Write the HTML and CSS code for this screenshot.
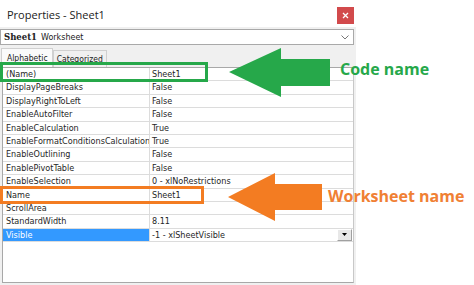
FILE: index.html
```html
<!DOCTYPE html>
<html>
<head>
<meta charset="utf-8">
<link rel="stylesheet" href="styles.css">
</head>
<body>
<div class="stage">
  <div class="window">
    <div class="titlebar">
      <span class="title">Properties - Sheet1</span>
      <div class="close">
        <svg width="7" height="7" viewBox="0 0 7 7"><path d="M1 1L6 6M6 1L1 6" stroke="#fff" stroke-width="1.3"/></svg>
      </div>
    </div>
    <div class="body">
      <div class="objsel">
        <span class="objname">Sheet1</span><span class="objtype">Worksheet</span>
        <svg class="chev" width="8" height="5" viewBox="0 0 8 5"><path d="M0.5 0.5L4 4L7.5 0.5" fill="none" stroke="#777" stroke-width="1"/></svg>
      </div>
      <div class="tabs">
        <div class="tab active">Alphabetic</div>
        <div class="tab">Categorized</div>
      </div>
      <div class="grid">
        <div class="row"><div class="k">(Name)</div><div class="v">Sheet1</div></div>
        <div class="row"><div class="k">DisplayPageBreaks</div><div class="v">False</div></div>
        <div class="row"><div class="k">DisplayRightToLeft</div><div class="v">False</div></div>
        <div class="row"><div class="k">EnableAutoFilter</div><div class="v">False</div></div>
        <div class="row"><div class="k">EnableCalculation</div><div class="v">True</div></div>
        <div class="row"><div class="k">EnableFormatConditionsCalculation</div><div class="v">True</div></div>
        <div class="row"><div class="k">EnableOutlining</div><div class="v">False</div></div>
        <div class="row"><div class="k">EnablePivotTable</div><div class="v">False</div></div>
        <div class="row"><div class="k">EnableSelection</div><div class="v">0 - xlNoRestrictions</div></div>
        <div class="row"><div class="k">Name</div><div class="v">Sheet1</div></div>
        <div class="row"><div class="k">ScrollArea</div><div class="v"></div></div>
        <div class="row"><div class="k">StandardWidth</div><div class="v">8.11</div></div>
        <div class="row sel"><div class="k">Visible</div><div class="v">-1 - xlSheetVisible<span class="ddbtn"><svg width="5" height="3" viewBox="0 0 5 3"><path d="M0 0H5L2.5 3Z" fill="#000"/></svg></span></div></div>
      </div>
    </div>
  </div>

  <svg class="overlay" width="474" height="285" viewBox="0 0 474 285">
    <rect x="1.5" y="63.5" width="205" height="17" fill="none" stroke="#26a84a" stroke-width="3"/>
    <polygon points="229,72 281,48 281,59 330,59 330,86 281,86 281,97" fill="#26a84a"/>
    <rect x="1.5" y="187.5" width="201" height="15" fill="none" stroke="#f37c22" stroke-width="3"/>
    <polygon points="228,197 275,173 275,184 322,184 322,210 275,210 275,221" fill="#f37c22"/>
  </svg>
  <div class="label code">Code name</div>
  <div class="label wsname">Worksheet name</div>
</div>
</body>
</html>
```
FILE: styles.css
```css
html, body {
  margin: 0;
  padding: 0;
  background: #fff;
}
.stage {
  position: relative;
  width: 474px;
  height: 285px;
  overflow: hidden;
}
.window {
  width: 356px;
  height: 285px;
  display: flex;
  flex-direction: column;
}
.titlebar {
  height: 27px;
  background: #fff;
  display: flex;
  align-items: flex-start;
  justify-content: space-between;
  padding: 7px 2px 0 7px;
  box-sizing: border-box;
}
.title {
  font-family: "Open Sans", sans-serif;
  font-size: 11px;
  line-height: 16px;
  color: #222;
}
.close {
  width: 17px;
  height: 17px;
  background: #d24a4c;
  display: flex;
  align-items: center;
  justify-content: center;
}
.body {
  flex: 1;
  background: #f0f0f0;
  display: flex;
  flex-direction: column;
  padding: 2px 2px 0 0;
}
.objsel {
  height: 16px;
  box-sizing: border-box;
  border: 1px solid #a9a9a9;
  background: #fff;
  display: flex;
  align-items: center;
  padding: 0 4px 0 3px;
  font-family: "DejaVu Sans", sans-serif;
  font-size: 8px;
  color: #222;
}
.objname {
  font-family: "DejaVu Serif", serif;
  font-weight: bold;
  font-size: 8.5px;
  margin-right: 4px;
}
.objtype {
  flex: 1;
}
.tabs {
  display: flex;
  height: 20px;
  margin-top: 2px;
  padding-left: 1px;
  font-family: "DejaVu Sans Condensed", "DejaVu Sans", sans-serif;
  font-stretch: condensed;
  font-size: 8.5px;
  color: #222;
  align-items: flex-end;
}
.tab {
  height: 17px;
  padding: 0 3px;
  box-sizing: border-box;
  border: 1px solid #d0d0d0;
  border-bottom: none;
  display: flex;
  align-items: center;
  background: #f0f0f0;
}
.tab.active {
  height: 19px;
  background: #fafafa;
  padding: 0 4px 0 5px;
}
.grid {
  margin-left: 2px;
  height: 216px;
  box-sizing: border-box;
  border: 1px solid #a8a8a8;
  border-right-color: #c8c8c8;
  background: #fff;
  font-family: "DejaVu Sans Condensed", "DejaVu Sans", sans-serif;
  font-stretch: condensed;
  font-size: 9px;
  color: #262626;
}
.row {
  display: flex;
  height: 13.4px;
  box-sizing: border-box;
  border-bottom: 1px solid #dcdcdc;
  line-height: 13px;
}
.k {
  width: 147px;
  padding-left: 3px;
  box-sizing: border-box;
  border-right: 1px solid #dcdcdc;
  white-space: nowrap;
  overflow: hidden;
}
.v {
  flex: 1;
  padding-left: 2px;
  position: relative;
  white-space: nowrap;
}
.row.sel .k {
  background: #3399ff;
  color: #fff;
}
.ddbtn {
  position: absolute;
  right: 1px;
  top: 0;
  width: 15px;
  height: 12px;
  box-sizing: border-box;
  border: 1px solid #a0a0a0;
  border-left-color: #fff;
  border-top-color: #fff;
  background: #e8e8e8;
  display: flex;
  align-items: center;
  justify-content: center;
}
.overlay {
  position: absolute;
  left: 0;
  top: 0;
}
.label {
  position: absolute;
  font-family: "Open Sans", sans-serif;
  font-weight: 700;
  font-size: 16px;
  line-height: 20px;
  white-space: nowrap;
}
.label.code {
  left: 340px;
  top: 59px;
  color: #26a84a;
}
.label.wsname {
  left: 328px;
  top: 186px;
  color: #f08034;
}
```
